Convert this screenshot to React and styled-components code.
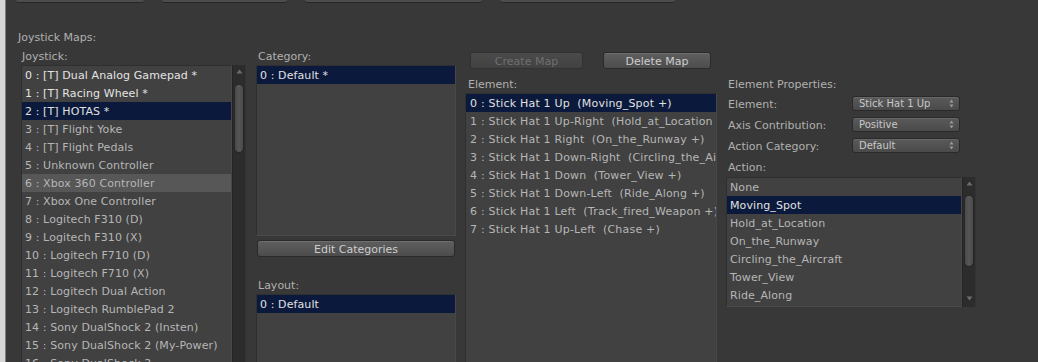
import React from 'react';
import styled, { createGlobalStyle } from 'styled-components';

const GlobalStyle = createGlobalStyle`
  html, body {
    margin: 0;
    padding: 0;
    background: #383838;
  }
  body {
    font-family: 'DejaVu Sans', 'Liberation Sans', sans-serif;
    font-size: 11px;
    color: #b4b4b4;
  }
`;

const joysticks = [
  { name: '0 : [T] Dual Analog Gamepad *', bright: true },
  { name: '1 : [T] Racing Wheel *', bright: true },
  { name: '2 : [T] HOTAS *', bright: true, selected: true },
  { name: '3 : [T] Flight Yoke' },
  { name: '4 : [T] Flight Pedals' },
  { name: '5 : Unknown Controller' },
  { name: '6 : Xbox 360 Controller', hover: true },
  { name: '7 : Xbox One Controller' },
  { name: '8 : Logitech F310 (D)' },
  { name: '9 : Logitech F310 (X)' },
  { name: '10 : Logitech F710 (D)' },
  { name: '11 : Logitech F710 (X)' },
  { name: '12 : Logitech Dual Action' },
  { name: '13 : Logitech RumblePad 2' },
  { name: '14 : Sony DualShock 2 (Insten)' },
  { name: '15 : Sony DualShock 2 (My-Power)' },
  { name: '16 : Sony DualShock 2' },
];

const elements = [
  '0 : Stick Hat 1 Up  (Moving_Spot +)',
  '1 : Stick Hat 1 Up-Right  (Hold_at_Location +)',
  '2 : Stick Hat 1 Right  (On_the_Runway +)',
  '3 : Stick Hat 1 Down-Right  (Circling_the_Aircraft +)',
  '4 : Stick Hat 1 Down  (Tower_View +)',
  '5 : Stick Hat 1 Down-Left  (Ride_Along +)',
  '6 : Stick Hat 1 Left  (Track_fired_Weapon +)',
  '7 : Stick Hat 1 Up-Left  (Chase +)',
];

const actions = [
  'None',
  'Moving_Spot',
  'Hold_at_Location',
  'On_the_Runway',
  'Circling_the_Aircraft',
  'Tower_View',
  'Ride_Along',
];

const properties = [
  { label: 'Element:', value: 'Stick Hat 1 Up' },
  { label: 'Axis Contribution:', value: 'Positive' },
  { label: 'Action Category:', value: 'Default' },
];

const topButtons = [128, 125, 177, 175];

const UpDownArrows = () => (
  <svg width="5" height="9" viewBox="0 0 5 9">
    <path d="M2.5 0.5 L4.5 3.5 L0.5 3.5 Z" fill="#9a9a9a" />
    <path d="M2.5 8.5 L4.5 5.5 L0.5 5.5 Z" fill="#9a9a9a" />
  </svg>
);

const Arrow = ({ down }) => (
  <svg width="7" height="5" viewBox="0 0 7 5">
    <path
      d={down ? 'M0.5 0.5 L6.5 0.5 L3.5 4.5 Z' : 'M3.5 0.5 L6.5 4.5 L0.5 4.5 Z'}
      fill="#6c6c6c"
    />
  </svg>
);

const Scrollbar = ({ thumbTop, thumbHeight, height, showDown }) => (
  <Track style={{ height }}>
    <ArrowSlot>
      <Arrow />
    </ArrowSlot>
    <Thumb style={{ marginTop: thumbTop, height: thumbHeight }} />
    {showDown ? (
      <ArrowSlot $bottom>
        <Arrow down />
      </ArrowSlot>
    ) : null}
  </Track>
);

const App = () => {
  return (
    <>
      <GlobalStyle />
      <Window>
        <EdgeStrip />
        <Content>
          <TopBar>
            {topButtons.map((w, i) => (
              <TopButton key={i} $width={w} />
            ))}
          </TopBar>
          <Title>Joystick Maps:</Title>
          <Columns>
            <JoystickColumn>
              <ColumnLabel $indent={1}>Joystick:</ColumnLabel>
              <ListWithBar>
                <ListBox $width={211} $height={300}>
                  {joysticks.map(j => (
                    <Row
                      key={j.name}
                      $selected={j.selected}
                      $hover={j.hover}
                      $bright={j.bright}
                    >
                      {j.name}
                    </Row>
                  ))}
                </ListBox>
                <Scrollbar thumbTop={7} thumbHeight={69} height={300} />
              </ListWithBar>
            </JoystickColumn>

            <CategoryColumn>
              <ColumnLabel $indent={2}>Category:</ColumnLabel>
              <ListBox $width={200} $height={171}>
                <Row $selected>0 : Default *</Row>
              </ListBox>
              <Button $wide>Edit Categories</Button>
              <LayoutLabel>Layout:</LayoutLabel>
              <ListBox $width={200} $height={100}>
                <Row $selected>0 : Default</Row>
              </ListBox>
            </CategoryColumn>

            <ElementColumn>
              <ButtonRow>
                <Button $width={113} disabled>
                  Create Map
                </Button>
                <Button $width={108}>Delete Map</Button>
              </ButtonRow>
              <ElementLabel>Element:</ElementLabel>
              <ListBox $width={252} $height={300}>
                {elements.map((e, i) => (
                  <Row key={e} $selected={i === 0} $pad={4} $spaced>
                    {e}
                  </Row>
                ))}
              </ListBox>
            </ElementColumn>

            <PropertiesColumn>
              <PropertiesTitle>Element Properties:</PropertiesTitle>
              {properties.map(p => (
                <FormRow key={p.label}>
                  <FormLabel>{p.label}</FormLabel>
                  <Dropdown>
                    <span>{p.value}</span>
                    <UpDownArrows />
                  </Dropdown>
                </FormRow>
              ))}
              <FormRow>
                <FormLabel>Action:</FormLabel>
              </FormRow>
              <ListWithBar>
                <ListBox $width={236} $height={130} $padBottom>
                  {actions.map((a, i) => (
                    <Row key={a} $selected={i === 1}>
                      {a}
                    </Row>
                  ))}
                </ListBox>
                <Scrollbar
                  thumbTop={6}
                  thumbHeight={72}
                  height={130}
                  showDown
                />
              </ListWithBar>
            </PropertiesColumn>
          </Columns>
        </Content>
      </Window>
    </>
  );
};

export default App;

const Window = styled.div`
  display: flex;
  width: 1038px;
  height: 362px;
  overflow: hidden;
  background: #383838;
`;

const EdgeStrip = styled.div`
  flex: 0 0 5px;
  background: #d6d6d6;
  border-right: 1px solid #7e7e7e;
`;

const Content = styled.div`
  display: flex;
  flex-direction: column;
  padding-left: 12px;
`;

const TopBar = styled.div`
  display: flex;
  gap: 18px;
  height: 3px;
  margin-left: -2px;
`;

const TopButton = styled.div`
  width: ${props => props.$width}px;
  height: 2px;
  background: #4c4c4c;
  border-bottom: 1px solid #262626;
  border-radius: 0 0 3px 3px;
`;

const Title = styled.div`
  margin-top: 26px;
  height: 18px;
  line-height: 18px;
  color: #b0b0b0;
`;

const Columns = styled.div`
  display: flex;
  gap: 9px;
  margin-top: -2px;
`;

const ColumnLabel = styled.div`
  padding: 3px 0 0 ${props => props.$indent}px;
  height: 17px;
  line-height: 18px;
  color: #b0b0b0;
`;

const JoystickColumn = styled.div`
  display: flex;
  flex-direction: column;
  margin-left: 3px;
  margin-right: 1px;
`;

const CategoryColumn = styled.div`
  display: flex;
  flex-direction: column;
  width: 200px;
`;

const ElementColumn = styled.div`
  display: flex;
  flex-direction: column;
  width: 252px;
`;

const PropertiesColumn = styled.div`
  display: flex;
  flex-direction: column;
  width: 252px;
`;

const ListWithBar = styled.div`
  display: flex;
  align-items: flex-start;
`;

const ListBox = styled.div`
  box-sizing: border-box;
  width: ${props => props.$width}px;
  height: ${props => props.$height}px;
  background: #414141;
  border: 1px solid #2f2f2f;
  border-right-color: #474747;
  border-bottom-color: #4a4a4a;
  overflow: hidden;
  padding-bottom: ${props => (props.$padBottom ? 2 : 0)}px;
`;

const Row = styled.div`
  height: 18px;
  line-height: 20px;
  padding-left: ${props => props.$pad || 3}px;
  white-space: pre;
  overflow: hidden;
  letter-spacing: ${props => (props.$spaced ? '0.2px' : '0.1px')};
  color: ${props =>
    props.$selected ? '#e0e0e0' : props.$bright ? '#e4e4e4' : '#b6b6b6'};
  background: ${props =>
    props.$selected ? '#0b1a3c' : props.$hover ? '#575757' : 'transparent'};
`;

const Track = styled.div`
  box-sizing: border-box;
  display: flex;
  flex-direction: column;
  align-items: center;
  width: 14px;
  background: #2c2c2c;
  border-left: 1px solid #242424;
  border-right: 1px solid #333333;
`;

const ArrowSlot = styled.div`
  display: flex;
  justify-content: center;
  align-items: center;
  height: 11px;
  width: 100%;
  ${props =>
    props.$bottom ? 'margin-top: auto; margin-bottom: 3px;' : 'margin-top: 1px;'}
`;

const Thumb = styled.div`
  box-sizing: border-box;
  width: 10px;
  border-radius: 5px;
  background: linear-gradient(to right, #4a4a4a, #565656 50%, #4a4a4a);
  border: 1px solid #262626;
  box-shadow: inset 0 1px 0 rgba(255, 255, 255, 0.08);
`;

const Button = styled.button`
  box-sizing: border-box;
  width: ${props => (props.$wide ? '198px' : `${props.$width}px`)};
  height: 17px;
  margin: ${props => (props.$wide ? '4px 0 0 1px' : '0')};
  padding: 1px 0 0;
  font-family: 'DejaVu Sans', 'Liberation Sans', sans-serif;
  font-size: 11px;
  line-height: 15px;
  color: #cdcdcd;
  background: linear-gradient(to bottom, #5f5f5f, #4c4c4c);
  border: 1px solid #2a2a2a;
  border-radius: 3px;
  box-shadow: inset 0 1px 0 rgba(255, 255, 255, 0.1);
  &:disabled {
    color: #6f6f6f;
    background: linear-gradient(to bottom, #4a4a4a, #424242);
    border-color: #323232;
    box-shadow: none;
  }
`;

const LayoutLabel = styled.div`
  margin-top: 20px;
  padding-left: 2px;
  height: 17px;
  line-height: 18px;
  color: #b0b0b0;
`;

const ButtonRow = styled.div`
  display: flex;
  gap: 20px;
  margin: 7px 0 0 5px;
`;

const ElementLabel = styled.div`
  padding: 7px 0 0 3px;
  height: 17px;
  line-height: 18px;
  color: #b0b0b0;
`;

const PropertiesTitle = styled.div`
  margin-top: 31px;
  padding-left: 2px;
  height: 17px;
  line-height: 18px;
  color: #b0b0b0;
`;

const FormRow = styled.div`
  display: flex;
  align-items: center;
  height: 21px;
`;

const FormLabel = styled.div`
  width: 124px;
  padding: 1px 0 0 2px;
  color: #b0b0b0;
`;

const Dropdown = styled.div`
  box-sizing: border-box;
  display: flex;
  align-items: center;
  justify-content: space-between;
  width: 108px;
  height: 15px;
  padding: 0 5px 0 6px;
  font-size: 10px;
  color: #c8c8c8;
  background: linear-gradient(to bottom, #5a5a5a, #4a4a4a);
  border: 1px solid #2a2a2a;
  border-radius: 3px;
  box-shadow: inset 0 1px 0 rgba(255, 255, 255, 0.08);
`;
